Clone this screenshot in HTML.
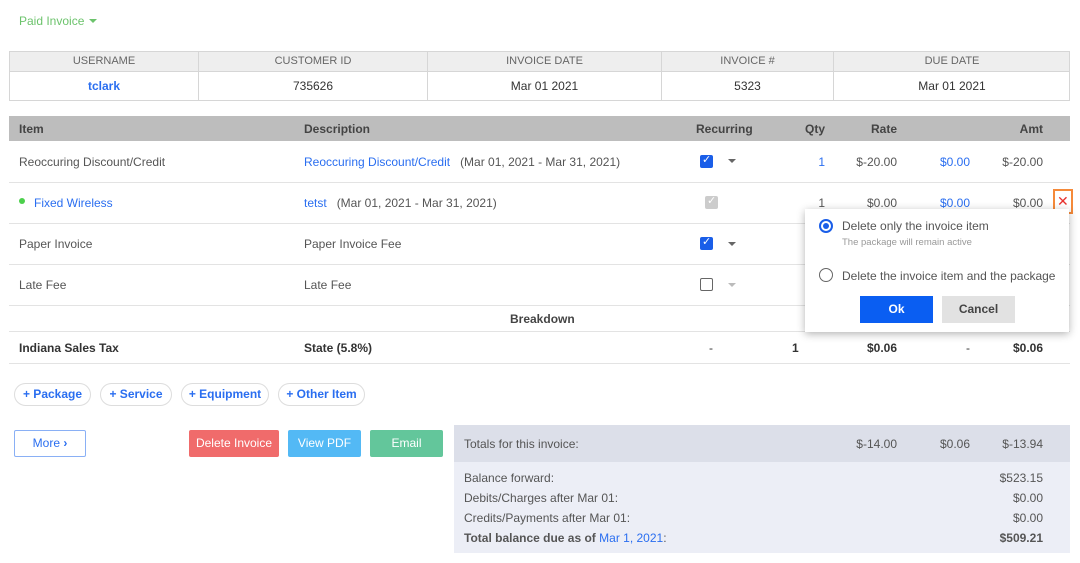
<!DOCTYPE html>
<html><head><meta charset="utf-8"><style>
*{box-sizing:border-box;margin:0;padding:0}
body{width:1080px;height:563px;background:#fff;font-family:"Liberation Sans",Arial,sans-serif;font-size:12px;color:#555;position:relative;overflow:hidden}
.a{position:absolute;white-space:nowrap}
.blue{color:#2a6ef0}
.r{text-align:right}
.b{font-weight:bold}
.hl{position:absolute;left:9px;width:1061px;height:1px;background:#e3e3e3}
.cb{position:absolute;width:13px;height:13px;border-radius:2px}
.cbon{background:#1a5ee8}
.caret{position:absolute;width:0;height:0;border-left:4px solid transparent;border-right:4px solid transparent;border-top:4px solid #666}
.pill{position:absolute;top:383px;height:23px;border:1px solid #ddd;border-radius:12px;color:#2a6ef0;font-weight:bold;font-size:12px;line-height:21px;text-align:center}
.btn{position:absolute;top:430px;height:27px;color:#fff;font-size:12px;line-height:27px;text-align:center;border-radius:2px}
</style></head><body>
<div class="a" style="left:19px;top:14px;color:#6cc36c;font-size:12px">Paid Invoice</div>
<div class="caret" style="left:89px;top:19px;border-top-color:#6cc36c"></div>

<!-- header table -->
<div class="a" style="left:9px;top:51px;width:1061px;height:50px;border:1px solid #d6d6d6"></div>
<div class="a" style="left:10px;top:52px;width:1059px;height:20px;background:#eee;border-bottom:1px solid #d6d6d6"></div>
<div class="a" style="left:198px;top:52px;width:1px;height:48px;background:#d6d6d6"></div>
<div class="a" style="left:427px;top:52px;width:1px;height:48px;background:#d6d6d6"></div>
<div class="a" style="left:661px;top:52px;width:1px;height:48px;background:#d6d6d6"></div>
<div class="a" style="left:833px;top:52px;width:1px;height:48px;background:#d6d6d6"></div>
<div class="a" style="left:10px;width:188px;top:55px;text-align:center;color:#666;font-size:11px">USERNAME</div>
<div class="a" style="left:199px;width:228px;top:55px;text-align:center;color:#666;font-size:11px">CUSTOMER ID</div>
<div class="a" style="left:428px;width:233px;top:55px;text-align:center;color:#666;font-size:11px">INVOICE DATE</div>
<div class="a" style="left:662px;width:171px;top:55px;text-align:center;color:#666;font-size:11px">INVOICE #</div>
<div class="a" style="left:834px;width:236px;top:55px;text-align:center;color:#666;font-size:11px">DUE DATE</div>
<div class="a blue b" style="left:10px;width:188px;top:79px;text-align:center">tclark</div>
<div class="a" style="left:199px;width:228px;top:79px;text-align:center;color:#333">735626</div>
<div class="a" style="left:428px;width:233px;top:79px;text-align:center;color:#333">Mar 01 2021</div>
<div class="a" style="left:662px;width:171px;top:79px;text-align:center;color:#333">5323</div>
<div class="a" style="left:834px;width:236px;top:79px;text-align:center;color:#333">Mar 01 2021</div>

<!-- items header -->
<div class="a" style="left:9px;top:116px;width:1061px;height:25px;background:#bdbdbd"></div>
<div class="a b" style="left:19px;top:122px;color:#444">Item</div>
<div class="a b" style="left:304px;top:122px;color:#444">Description</div>
<div class="a b" style="left:696px;top:122px;color:#444">Recurring</div>
<div class="a b r" style="left:780px;width:45px;top:122px;color:#444">Qty</div>
<div class="a b r" style="left:850px;width:47px;top:122px;color:#444">Rate</div>
<div class="a b r" style="left:990px;width:53px;top:122px;color:#444">Amt</div>

<!-- row1 -->
<div class="a" style="left:19px;top:155px">Reoccuring Discount/Credit</div>
<div class="a" style="left:304px;top:155px"><span class="blue">Reoccuring Discount/Credit</span>&nbsp;&nbsp;&nbsp;(Mar 01, 2021 - Mar 31, 2021)</div>
<div class="cb cbon" style="left:700px;top:155px"></div><div class="a" style="left:702px;top:153px;color:#fff;font-size:11px">✓</div>
<div class="caret" style="left:728px;top:159px"></div>
<div class="a r blue" style="left:780px;width:45px;top:155px">1</div>
<div class="a r" style="left:830px;width:67px;top:155px">$-20.00</div>
<div class="a r blue" style="left:910px;width:60px;top:155px">$0.00</div>
<div class="a r" style="left:980px;width:63px;top:155px">$-20.00</div>
<div class="hl" style="top:182px"></div>

<!-- row2 -->
<div class="a" style="left:19px;top:198px;width:6px;height:6px;border-radius:50%;background:#4cd04c"></div>
<div class="a blue" style="left:34px;top:196px">Fixed Wireless</div>
<div class="a" style="left:304px;top:196px"><span class="blue">tetst</span>&nbsp;&nbsp;&nbsp;(Mar 01, 2021 - Mar 31, 2021)</div>
<div class="cb" style="left:705px;top:196px;background:#ccc"></div><div class="a" style="left:707px;top:194px;color:#fff;font-size:11px">✓</div>
<div class="a r" style="left:780px;width:45px;top:196px">1</div>
<div class="a r" style="left:830px;width:67px;top:196px">$0.00</div>
<div class="a r blue" style="left:910px;width:60px;top:196px">$0.00</div>
<div class="a r" style="left:980px;width:63px;top:196px">$0.00</div>
<div class="a" style="left:1053px;top:189px;width:20px;height:25px;border:2px solid #f58a3a"></div>
<div class="a" style="left:1057px;top:193px;color:#e8322e;font-size:14px">✕</div>
<div class="hl" style="top:223px"></div>

<!-- row3 -->
<div class="a" style="left:19px;top:237px">Paper Invoice</div>
<div class="a" style="left:304px;top:237px">Paper Invoice Fee</div>
<div class="cb cbon" style="left:700px;top:237px"></div><div class="a" style="left:702px;top:235px;color:#fff;font-size:11px">✓</div>
<div class="caret" style="left:728px;top:242px"></div>
<div class="hl" style="top:264px"></div>

<!-- row4 -->
<div class="a" style="left:19px;top:278px">Late Fee</div>
<div class="a" style="left:304px;top:278px">Late Fee</div>
<div class="cb" style="left:700px;top:278px;border:1.5px solid #666"></div>
<div class="caret" style="left:728px;top:283px;border-top-color:#bbb"></div>
<div class="hl" style="top:305px"></div>

<div class="a b" style="left:510px;top:312px;color:#444">Breakdown</div>
<div class="hl" style="top:331px"></div>
<div class="a b" style="left:19px;top:341px;color:#333">Indiana Sales Tax</div>
<div class="a b" style="left:304px;top:341px;color:#333">State (5.8%)</div>
<div class="a" style="left:709px;top:341px;color:#333">-</div>
<div class="a b" style="left:792px;top:341px;color:#333">1</div>
<div class="a b r" style="left:830px;width:67px;top:341px;color:#333">$0.06</div>
<div class="a" style="left:966px;top:341px;color:#333">-</div>
<div class="a b r" style="left:980px;width:63px;top:341px;color:#333">$0.06</div>
<div class="hl" style="top:363px"></div>

<!-- popup -->
<div class="a" style="left:805px;top:209px;width:264px;height:123px;background:#fff;box-shadow:0 2px 8px rgba(0,0,0,.3)"></div>
<div class="a" style="left:819px;top:219px;width:14px;height:14px;border-radius:50%;border:2px solid #1a5ee8"></div>
<div class="a" style="left:823px;top:223px;width:6px;height:6px;border-radius:50%;background:#1a5ee8"></div>
<div class="a" style="left:842px;top:219px;color:#555">Delete only the invoice item</div>
<div class="a" style="left:842px;top:237px;color:#999;font-size:9.5px">The package will remain active</div>
<div class="a" style="left:819px;top:268px;width:14px;height:14px;border-radius:50%;border:1.5px solid #666"></div>
<div class="a" style="left:842px;top:269px;color:#555">Delete the invoice item and the package</div>
<div class="a b" style="left:860px;top:296px;width:73px;height:27px;background:#0a5ef2;color:#fff;text-align:center;line-height:27px">Ok</div>
<div class="a" style="left:942px;top:296px;width:73px;height:27px;background:#e2e2e2;color:#444;text-align:center;line-height:27px;font-weight:bold">Cancel</div>

<!-- pills -->
<div class="pill" style="left:14px;width:77px">+ Package</div>
<div class="pill" style="left:100px;width:72px">+ Service</div>
<div class="pill" style="left:181px;width:88px">+ Equipment</div>
<div class="pill" style="left:278px;width:87px">+ Other Item</div>

<!-- buttons -->
<div class="btn" style="left:14px;width:72px;border:1px solid #8ab0f5;color:#2a6ef0;line-height:25px">More <b>›</b></div>
<div class="btn" style="left:189px;width:90px;background:#f06b6b">Delete Invoice</div>
<div class="btn" style="left:288px;width:73px;background:#53b9f5">View PDF</div>
<div class="btn" style="left:370px;width:73px;background:#63c69b">Email</div>

<!-- totals -->
<div class="a" style="left:454px;top:425px;width:616px;height:128px;background:#eceef6"></div>
<div class="a" style="left:454px;top:425px;width:616px;height:37px;background:#dcdfe9"></div>
<div class="a" style="left:464px;top:437px">Totals for this invoice:</div>
<div class="a r" style="left:830px;width:67px;top:437px">$-14.00</div>
<div class="a r" style="left:910px;width:60px;top:437px">$0.06</div>
<div class="a r" style="left:980px;width:63px;top:437px">$-13.94</div>
<div class="a" style="left:464px;top:471px">Balance forward:</div>
<div class="a r" style="left:960px;width:83px;top:471px">$523.15</div>
<div class="a" style="left:464px;top:491px">Debits/Charges after Mar 01:</div>
<div class="a r" style="left:960px;width:83px;top:491px">$0.00</div>
<div class="a" style="left:464px;top:511px">Credits/Payments after Mar 01:</div>
<div class="a r" style="left:960px;width:83px;top:511px">$0.00</div>
<div class="a" style="left:464px;top:531px"><b>Total balance due as of</b> <span class="blue">Mar 1, 2021</span>:</div>
<div class="a r b" style="left:960px;width:83px;top:531px">$509.21</div>
</body></html>
